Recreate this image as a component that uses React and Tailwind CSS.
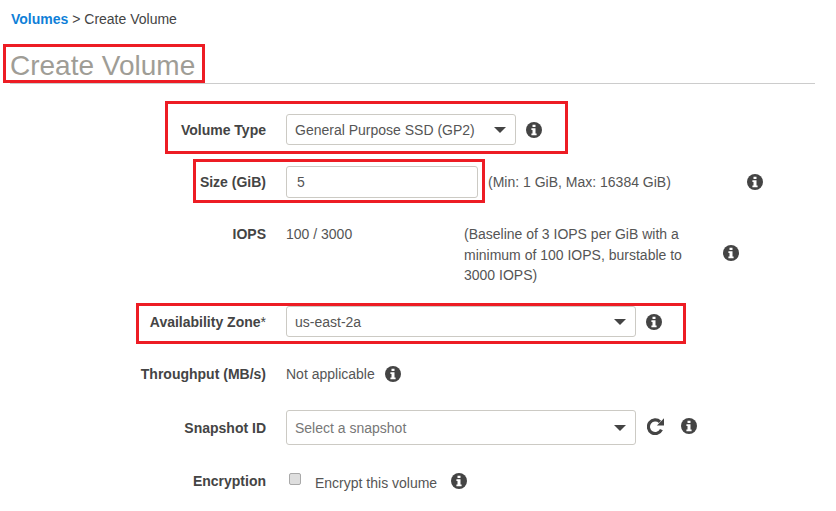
import React from 'react';

const Info = ({ className = '' }) => (
    <svg width="16" height="16" viewBox="0 0 16 16" className={`shrink-0 ${className}`}>
        <circle cx="8" cy="8" r="8" fill="#444444" />
        <path d="M6.5 2.7h3v2.4h-3zM5.4 6.2h4.1v5.3h1.1v1.8H5.4v-1.8h1.1V8H5.4z" fill="#ffffff" />
    </svg>
);

const Refresh = ({ className = '' }) => (
    <svg width="17" height="17" viewBox="0 0 17 17" className={`shrink-0 ${className}`}>
        <path d="M14.4 11.6A6.8 6.8 0 1 1 13 3.9" fill="none" stroke="#444444" strokeWidth="3.2" />
        <path d="M17 .3V7.4H9.9z" fill="#444444" />
    </svg>
);

const Caret = () => (
    <svg width="12" height="6" viewBox="0 0 12 6" className="shrink-0">
        <path d="M0 0h12L6 6z" fill="#444444" />
    </svg>
);

const Select = ({ width, height, muted, children }) => (
    <div className={`flex items-center justify-between rounded-[3px] border border-[#cccac4] bg-white pl-[8px] pr-[9px] ${width} ${height} ${muted ? 'text-[#777777]' : 'text-[#555555]'}`}>
        <span>{children}</span>
        <Caret />
    </div>
);

const Row = ({ label, className = '', labelClass = 'self-center', children }) => (
    <div className={`flex ${className}`}>
        <label className={`w-[266px] shrink-0 text-right font-bold text-[#444444] ${labelClass}`}>{label}</label>
        <div className="ml-[20px] flex min-w-0 flex-1 items-center">{children}</div>
    </div>
);

const Annotation = ({ className }) => <div className={`pointer-events-none absolute border-[3px] border-[#ed1c24] ${className}`} />;

const App = () => {
    return (
        <div className="relative h-[511px] w-[836px] overflow-hidden bg-white font-['Liberation_Sans',Arial,sans-serif] text-[14px] leading-[20px] text-[#444444]">
            <div className="pl-[11px] pt-[9px]">
                <a className="font-bold text-[#0f7fd8]">Volumes</a> <span>&gt; Create Volume</span>
            </div>

            <h1 className="ml-[10px] mt-[19px] text-[28px] leading-[35px] text-[#9f9d96]">Create Volume</h1>
            <div className="ml-[10px] mr-[21px] h-px bg-[#cccccc]" />

            <div className="mt-[30px]">
                <Row label="Volume Type">
                    <Select width="w-[230px]" height="h-[31px]">General Purpose SSD (GP2)</Select>
                    <Info className="ml-[10px]" />
                </Row>

                <Row label="Size (GiB)" className="mt-[21px]">
                    <input
                        defaultValue="5"
                        className="h-[32px] w-[192px] rounded-[3px] border border-[#cccac4] bg-white px-[10px] text-[#555555] outline-none"
                    />
                    <span className="ml-[10px] w-[259px] shrink-0 text-[#555555]">(Min: 1 GiB, Max: 16384 GiB)</span>
                    <Info />
                </Row>

                <Row label="IOPS" className="mt-[26px]" labelClass="self-start">
                    <div className="w-[178px] shrink-0 self-start text-[#555555]">100 / 3000</div>
                    <div className="w-[259px] shrink-0 pr-[30px] leading-[20.5px] text-[#555555]">
                        (Baseline of 3 IOPS per GiB with a minimum of 100 IOPS, burstable to 3000 IOPS)
                    </div>
                    <Info className="-mt-[3px]" />
                </Row>

                <Row label={<>Availability Zone<span className="font-normal">*</span></>} className="mt-[20.5px]">
                    <Select width="w-[350px]" height="h-[31px]">us-east-2a</Select>
                    <Info className="ml-[10px]" />
                </Row>

                <Row label="Throughput (MB/s)" className="mt-[21px] h-[32px]">
                    <span className="text-[#555555]">Not applicable</span>
                    <Info className="ml-[10px]" />
                </Row>

                <Row label="Snapshot ID" className="mt-[20px]">
                    <Select width="w-[350px]" height="h-[35px]" muted>Select a snapshot</Select>
                    <Refresh className="ml-[11px] -mt-[2px]" />
                    <Info className="ml-[17px] -mt-[3px]" />
                </Row>

                <Row label="Encryption" className="mt-[20px] h-[32px]">
                    <span className="ml-[3px] h-[12px] w-[12px] shrink-0 -translate-y-[2px] rounded-[2px] border border-[#a9a9a9] bg-[#dedede]" />
                    <span className="ml-[14px] translate-y-[2px] text-[#555555]">Encrypt this volume</span>
                    <Info className="ml-[14px]" />
                </Row>
            </div>

            <Annotation className="left-[3px] top-[44px] h-[39px] w-[202px]" />
            <Annotation className="left-[165px] top-[101px] h-[53px] w-[403px]" />
            <Annotation className="left-[193px] top-[159px] h-[44px] w-[292px]" />
            <Annotation className="left-[136px] top-[303px] h-[41px] w-[550px]" />
        </div>
    );
};

export default App;
